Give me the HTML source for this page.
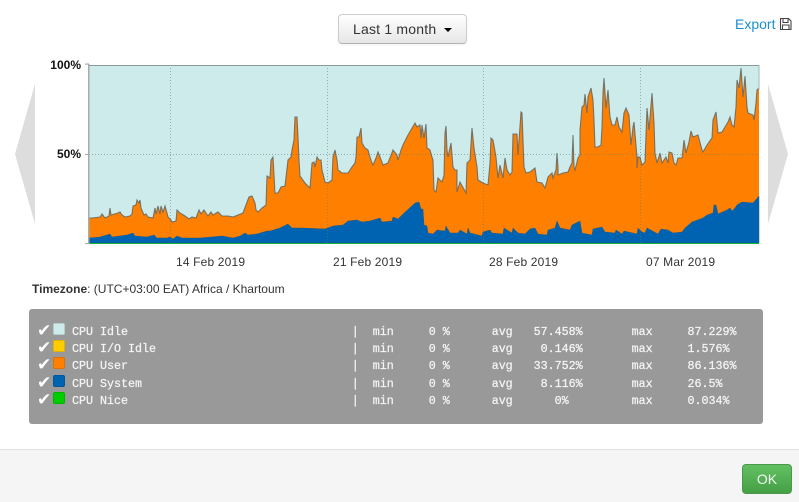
<!DOCTYPE html>
<html><head><meta charset="utf-8"><style>
html,body{margin:0;padding:0;background:#fff;}
body{width:799px;height:502px;position:relative;overflow:hidden;font-family:"Liberation Sans",sans-serif;}
.abs{position:absolute;}
#btn{left:338px;top:14px;width:127px;height:28px;border:1px solid #ccc;border-bottom-color:#b3b3b3;border-radius:4px;background:linear-gradient(#fff,#e6e6e6);color:#333;font-size:14px;line-height:28px;box-shadow:inset 0 1px 0 rgba(255,255,255,.2),0 1px 2px rgba(0,0,0,.05);}
#btn span{position:absolute;left:14px;top:0;white-space:nowrap;letter-spacing:.2px;}
#btn i{position:absolute;left:105px;top:13px;width:0;height:0;border-left:4px solid transparent;border-right:4px solid transparent;border-top:4px solid #000;}
#exp{left:735px;top:16px;color:#1a8fd1;font-size:14px;line-height:16px;}
#tz{left:32px;top:282px;font-size:12px;line-height:14px;color:#333;white-space:nowrap;}
#lg{left:29px;top:309px;width:734px;height:115px;background:#999;border-radius:3px;}
.r{position:absolute;left:72px;margin:0;font:11.67px/14px "Liberation Mono",monospace;color:#f4f4f4;white-space:pre;-webkit-text-stroke:.25px #f4f4f4;}
.c{position:absolute;left:37px;font:17px/16px "DejaVu Sans",sans-serif;color:#fff;}
.s{position:absolute;left:53px;width:10px;height:10px;border:1px solid;border-radius:2px;}
#ft{left:0;top:449px;width:799px;height:52px;background:#f5f5f5;border-top:1px solid #e2e2e2;}
#ok{left:742px;top:464px;width:48px;height:28px;border:1px solid #4a994a;border-radius:4px;background:linear-gradient(#62c062,#46a046);color:#f4f4f4;font-size:14px;line-height:28px;text-align:center;}
</style></head><body>
<svg class="abs" style="left:0;top:0" width="799" height="290" xmlns="http://www.w3.org/2000/svg">
<polygon points="35,84 15,154 35,224" fill="#ddd"/>
<polygon points="768,84 788,154 768,224" fill="#ddd"/>
<rect x="89" y="65" width="670" height="178" fill="#cdebeb"/>
<polygon fill="#ff8000" points="89,243 89,218 92,218 100,217 102,214 105,218 109,216 110,208 111,215 118,213 120,212 122,215 125,217 130,216 132,214 133,206 136,205 137,200 139,203 140,200 141,208 144,215 146,214 148,217 153,218 155,208 156,214 158,206 160,214 161,206 163,212 165,206 167,213 168,217 171,220 172,222 176,221 177,210 180,213 185,216 189,219 192,217 196,218 199,210 201,214 204,210 206,213 208,216 211,212 213,215 218,212 222,216 228,216 233,217 238,215 243,213 246,205 249,197 252,196 255,203 256,210 258,212 262,208 266,205 267,176 270,178 271,160 273,157 274,175 275,193 278,193 281,187 285,186 288,160 291,157 292,150 294,140 295,117 297,117 298,137 299,160 300,176 305,183 310,188 312,163 314,162 315,167 317,157 319,160 321,160 322,170 325,182 328,183 332,180 333,157 335,150 337,160 338,170 342,173 348,173 352,167 355,163 356,157 357,137 359,137 361,128 362,143 365,148 368,150 370,157 372,163 373,165 376,158 378,152 380,157 383,165 388,163 393,150 397,155 398,160 401,150 403,145 408,135 415,123 417,127 420,125 421,138 422,125 424,138 426,124 427,148 430,150 432,157 433,160 434,190 436,192 438,178 442,182 444,175 445,133 446,126 447,150 448,157 451,143 453,167 455,170 457,170 457,192 460,182 466,193 467,163 470,160 472,128 474,148 477,167 478,180 483,183 488,185 490,163 491,138 493,140 496,157 498,178 500,165 503,178 505,158 507,170 510,175 512,172 513,134 517,134 518,155 521,112 522,113 524,167 526,173 530,172 535,168 537,182 542,183 545,188 548,177 552,173 553,178 556,170 557,153 558,167 558,175 563,173 568,172 570,167 572,163 573,135 574,167 575,170 578,158 580,155 580,130 582,107 584,105 585,94 587,113 588,97 591,88 593,100 594,120 595,147 598,147 601,145 602,127 603,93 604,78 606,108 608,90 610,117 612,125 615,125 617,117 619,127 622,132 624,113 626,108 629,115 631,145 633,127 634,122 637,157 637,168 638,157 640,157 642,165 645,162 647,108 649,130 652,93 654,123 655,153 657,163 660,153 662,163 666,157 668,163 669,152 672,153 674,163 676,165 678,158 682,158 684,140 686,153 689,142 691,131 693,137 698,135 702,150 703,152 707,145 712,138 713,120 716,112 718,133 722,132 725,127 728,122 730,117 732,125 734,127 736,107 737,80 739,88 741,68 743,97 745,76 747,107 748,113 753,115 754,120 756,103 757,90 759,88 759,243"/>
<polyline fill="none" stroke="#5a6060" stroke-opacity=".8" stroke-width="1.1" points="89,218 92,218 100,217 102,214 105,218 109,216 110,208 111,215 118,213 120,212 122,215 125,217 130,216 132,214 133,206 136,205 137,200 139,203 140,200 141,208 144,215 146,214 148,217 153,218 155,208 156,214 158,206 160,214 161,206 163,212 165,206 167,213 168,217 171,220 172,222 176,221 177,210 180,213 185,216 189,219 192,217 196,218 199,210 201,214 204,210 206,213 208,216 211,212 213,215 218,212 222,216 228,216 233,217 238,215 243,213 246,205 249,197 252,196 255,203 256,210 258,212 262,208 266,205 267,176 270,178 271,160 273,157 274,175 275,193 278,193 281,187 285,186 288,160 291,157 292,150 294,140 295,117 297,117 298,137 299,160 300,176 305,183 310,188 312,163 314,162 315,167 317,157 319,160 321,160 322,170 325,182 328,183 332,180 333,157 335,150 337,160 338,170 342,173 348,173 352,167 355,163 356,157 357,137 359,137 361,128 362,143 365,148 368,150 370,157 372,163 373,165 376,158 378,152 380,157 383,165 388,163 393,150 397,155 398,160 401,150 403,145 408,135 415,123 417,127 420,125 421,138 422,125 424,138 426,124 427,148 430,150 432,157 433,160 434,190 436,192 438,178 442,182 444,175 445,133 446,126 447,150 448,157 451,143 453,167 455,170 457,170 457,192 460,182 466,193 467,163 470,160 472,128 474,148 477,167 478,180 483,183 488,185 490,163 491,138 493,140 496,157 498,178 500,165 503,178 505,158 507,170 510,175 512,172 513,134 517,134 518,155 521,112 522,113 524,167 526,173 530,172 535,168 537,182 542,183 545,188 548,177 552,173 553,178 556,170 557,153 558,167 558,175 563,173 568,172 570,167 572,163 573,135 574,167 575,170 578,158 580,155 580,130 582,107 584,105 585,94 587,113 588,97 591,88 593,100 594,120 595,147 598,147 601,145 602,127 603,93 604,78 606,108 608,90 610,117 612,125 615,125 617,117 619,127 622,132 624,113 626,108 629,115 631,145 633,127 634,122 637,157 637,168 638,157 640,157 642,165 645,162 647,108 649,130 652,93 654,123 655,153 657,163 660,153 662,163 666,157 668,163 669,152 672,153 674,163 676,165 678,158 682,158 684,140 686,153 689,142 691,131 693,137 698,135 702,150 703,152 707,145 712,138 713,120 716,112 718,133 722,132 725,127 728,122 730,117 732,125 734,127 736,107 737,80 739,88 741,68 743,97 745,76 747,107 748,113 753,115 754,120 756,103 757,90 759,88"/>
<polygon fill="#0063b1" stroke="#2a5a80" stroke-width=".5" points="89,243 89,238 100,237 110,234 112,237 127,235 133,233 135,236 147,237 154,235 157,238 167,238 170,237 173,239 177,236 182,238 200,238 222,236 233,238 240,236 245,233 248,235 257,234 267,231 270,231 280,228 288,224 292,228 303,228 325,229 333,226 343,225 348,221 357,220 362,222 370,221 380,218 382,222 392,221 393,217 398,219 403,214 415,203 419,202 421,209 423,209 424,225 427,226 428,233 433,234 437,230 445,231 446,226 450,233 458,233 460,230 467,234 468,228 470,233 482,236 483,232 490,230 492,233 503,234 504,228 512,233 513,228 518,233 525,234 530,229 535,228 538,234 547,235 548,230 555,228 557,221 560,228 570,230 572,225 580,221 582,233 592,235 593,229 602,227 605,232 615,233 616,230 622,234 624,231 637,234 638,228 642,232 645,233 647,228 658,234 661,229 668,230 673,233 682,232 685,228 692,222 703,218 707,215 713,213 714,205 716,205 718,214 727,210 730,208 732,211 735,208 737,205 742,202 753,203 759,196 759,243"/>
<g stroke="#5a7a7a" stroke-opacity=".55" stroke-width="1" stroke-dasharray="1 2" fill="none">
<line x1="170.5" y1="65" x2="170.5" y2="243"/>
<line x1="327.5" y1="65" x2="327.5" y2="243"/>
<line x1="483.5" y1="65" x2="483.5" y2="243"/>
<line x1="640.5" y1="65" x2="640.5" y2="243"/>
<line x1="89" y1="154.5" x2="759" y2="154.5"/>
</g>
<rect x="89" y="243" width="670" height="1" fill="#12b23a"/>
<line x1="89" y1="65.5" x2="759" y2="65.5" stroke="#8a9a9a" stroke-width="1"/>
<line x1="759" y1="65" x2="759" y2="90" stroke="#a0b8b8" stroke-width="1"/>
<rect x="88" y="64" width="1.5" height="180" fill="#aaa"/>
<g fill="#aaa"><rect x="85" y="63.5" width="4" height="1.2"/><rect x="85" y="154" width="4" height="1"/><rect x="85" y="243" width="4" height="1"/></g>
<g font-family="Liberation Sans, sans-serif" font-size="12" fill="#111" font-weight="bold" text-anchor="end">
<text x="81" y="69">100%</text>
<text x="81" y="158">50%</text>
</g>
<g font-family="Liberation Sans, sans-serif" font-size="12" fill="#333">
<text x="176" y="266" textLength="69">14 Feb 2019</text>
<text x="333" y="266" textLength="69">21 Feb 2019</text>
<text x="489" y="266" textLength="69">28 Feb 2019</text>
<text x="646" y="266" textLength="69">07 Mar 2019</text>
</g>
<path d="M780.5 18.5H788.5L791 21V29.5H780.5Z M783 18.5V22.5H788V18.5 M782.5 29.5V25H789V29.5" fill="none" stroke="#444" stroke-width="1.1"/>
</svg>
<div class="abs" id="btn"><span>Last 1 month</span><i></i></div>
<div class="abs" id="exp">Export</div>
<div class="abs" id="tz"><b>Timezone</b>: (UTC+03:00 EAT) Africa / Khartoum</div>
<div class="abs" id="lg"></div>
<div class="c" style="top:323px">✔</div>
<div class="c" style="top:340px">✔</div>
<div class="c" style="top:357px">✔</div>
<div class="c" style="top:375px">✔</div>
<div class="c" style="top:392px">✔</div>
<div class="s" style="top:323px;background:#cdebeb;border-color:#b5cfcf"></div>
<div class="s" style="top:340px;background:#ffcc00;border-color:#e0b400"></div>
<div class="s" style="top:357px;background:#ff8000;border-color:#e07000"></div>
<div class="s" style="top:375px;background:#0063b1;border-color:#00569a"></div>
<div class="s" style="top:392px;background:#00cc00;border-color:#00b300"></div>
<pre class="r" style="top:325px">CPU Idle                                |  min     0 %      avg   57.458%       max     87.229%</pre>
<pre class="r" style="top:342px">CPU I/O Idle                            |  min     0 %      avg    0.146%       max     1.576%</pre>
<pre class="r" style="top:359px">CPU User                                |  min     0 %      avg   33.752%       max     86.136%</pre>
<pre class="r" style="top:377px">CPU System                              |  min     0 %      avg    8.116%       max     26.5%</pre>
<pre class="r" style="top:394px">CPU Nice                                |  min     0 %      avg      0%         max     0.034%</pre>
<div class="abs" id="ft"></div>
<div class="abs" id="ok">OK</div>
</body></html>
